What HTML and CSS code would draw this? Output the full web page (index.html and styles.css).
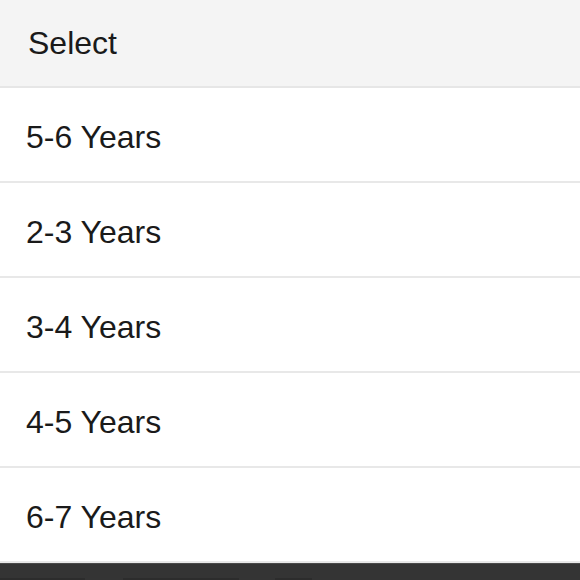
FILE: index.html
```html
<!DOCTYPE html>
<html>
<head>
<meta charset="utf-8">
<link rel="stylesheet" href="styles.css">
</head>
<body>
<div class="sheet">
  <div class="header">Select</div>
  <ul class="list">
    <li class="item">5-6 Years</li>
    <li class="item">2-3 Years</li>
    <li class="item">3-4 Years</li>
    <li class="item">4-5 Years</li>
    <li class="item">6-7 Years</li>
  </ul>
  <div class="footer">
    <span class="tab tab-a"></span>
    <span class="tab tab-b"></span>
    <span class="tab tab-c"></span>
  </div>
</div>
</body>
</html>
```
FILE: styles.css
```css
html, body {
  margin: 0;
  padding: 0;
  background: #ffffff;
}
.sheet {
  width: 580px;
  height: 580px;
  overflow: hidden;
  display: flex;
  flex-direction: column;
  font-family: "Liberation Sans", Arial, sans-serif;
  color: #1a1a1a;
}
.header {
  height: 85px;
  background: #f4f4f4;
  border-bottom: 2px solid #e6e6e6;
  display: flex;
  align-items: center;
  padding-left: 28px;
  padding-top: 1px;
  box-sizing: content-box;
  font-size: 32px;
}
.list {
  list-style: none;
  margin: 0;
  padding: 0;
}
.item {
  height: 95px;
  border-bottom: 2px solid #e8e8e8;
  display: flex;
  align-items: center;
  padding-left: 26px;
  padding-top: 6px;
  box-sizing: border-box;
  font-size: 32px;
}
.footer {
  flex: 1;
  background: #343434;
  border-top: 1px solid #4a4a4a;
  position: relative;
}
.tab {
  position: absolute;
  bottom: 0;
  height: 2px;
  background: #2c2c2c;
}
.tab-a { left: 0; width: 85px; }
.tab-b { left: 123px; width: 116px; }
.tab-c { left: 275px; width: 37px; }
```
